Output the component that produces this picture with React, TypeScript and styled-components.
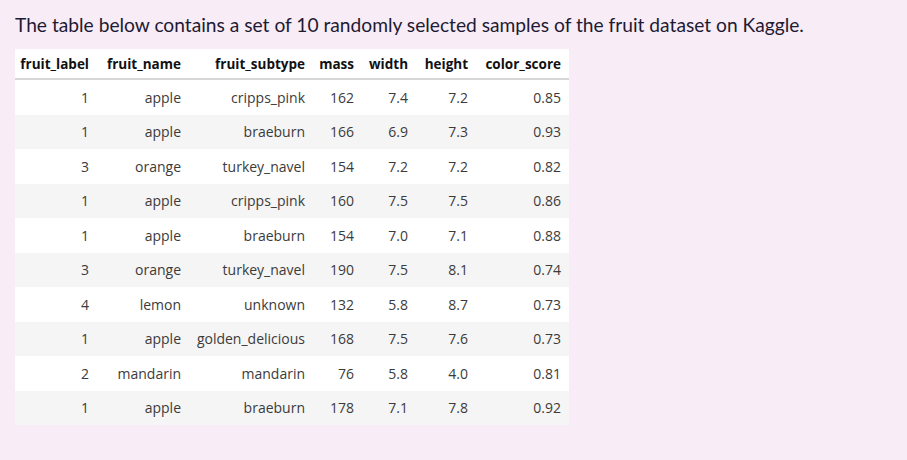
import { createGlobalStyle, styled } from "styled-components";

const GlobalStyle = createGlobalStyle`
  html, body {
    margin: 0;
    padding: 0;
    background: #f8ecf6;
  }
`;

type Row = [number, string, string, number, string, string, string];

const rows: Row[] = [
  [1, "apple", "cripps_pink", 162, "7.4", "7.2", "0.85"],
  [1, "apple", "braeburn", 166, "6.9", "7.3", "0.93"],
  [3, "orange", "turkey_navel", 154, "7.2", "7.2", "0.82"],
  [1, "apple", "cripps_pink", 160, "7.5", "7.5", "0.86"],
  [1, "apple", "braeburn", 154, "7.0", "7.1", "0.88"],
  [3, "orange", "turkey_navel", 190, "7.5", "8.1", "0.74"],
  [4, "lemon", "unknown", 132, "5.8", "8.7", "0.73"],
  [1, "apple", "golden_delicious", 168, "7.5", "7.6", "0.73"],
  [2, "mandarin", "mandarin", 76, "5.8", "4.0", "0.81"],
  [1, "apple", "braeburn", 178, "7.1", "7.8", "0.92"],
];

const columns = [
  { name: "fruit_label", width: 82 },
  { name: "fruit_name", width: 92 },
  { name: "fruit_subtype", width: 124 },
  { name: "mass", width: 49 },
  { name: "width", width: 54 },
  { name: "height", width: 60 },
  { name: "color_score", width: 93 },
];

const Page = styled.main`
  padding: 10px 15px;
  font-family: Lato, "Liberation Sans", sans-serif;
`;

const Intro = styled.p`
  margin: 0 0 10px;
  font-size: 19.2px;
  line-height: 29px;
  color: #1d1a33;
`;

const Table = styled.table`
  border-collapse: collapse;
  table-layout: fixed;
  width: 554px;
  font-family: "Open Sans", "Liberation Sans", sans-serif;
  background: #fff;
`;

const HeadCell = styled.th<{ $w: number }>`
  width: ${p => p.$w}px;
  height: 30px;
  padding: 0 8px 0 0;
  text-align: right;
  font-size: 13.5px;
  font-weight: 700;
  color: #111;
  border-bottom: 2px solid #d6d6d6;
  white-space: nowrap;
  box-sizing: border-box;
`;

const BodyRow = styled.tr<{ $odd: boolean }>`
  background: ${p => (p.$odd ? "#f5f5f5" : "#fff")};
`;

const Cell = styled.td`
  height: 34.5px;
  padding: 0 8px 0 0;
  text-align: right;
  font-size: 14px;
  color: #3b3b3b;
  white-space: nowrap;
`;

export default function App(): JSX.Element {
  return (
    <>
      <GlobalStyle />
      <Page>
        <Intro>The table below contains a set of 10 randomly selected samples of the fruit dataset on Kaggle.</Intro>
        <Table>
          <thead>
            <tr>
              {columns.map(c => (
                <HeadCell key={c.name} $w={c.width}>
                  {c.name}
                </HeadCell>
              ))}
            </tr>
          </thead>
          <tbody>
            {rows.map((r, i) => (
              <BodyRow key={`row_${i}`} $odd={i % 2 === 1}>
                {r.map((v, j) => (
                  <Cell key={`cell_${i}_${j}`}>{v}</Cell>
                ))}
              </BodyRow>
            ))}
          </tbody>
        </Table>
      </Page>
    </>
  );
}
